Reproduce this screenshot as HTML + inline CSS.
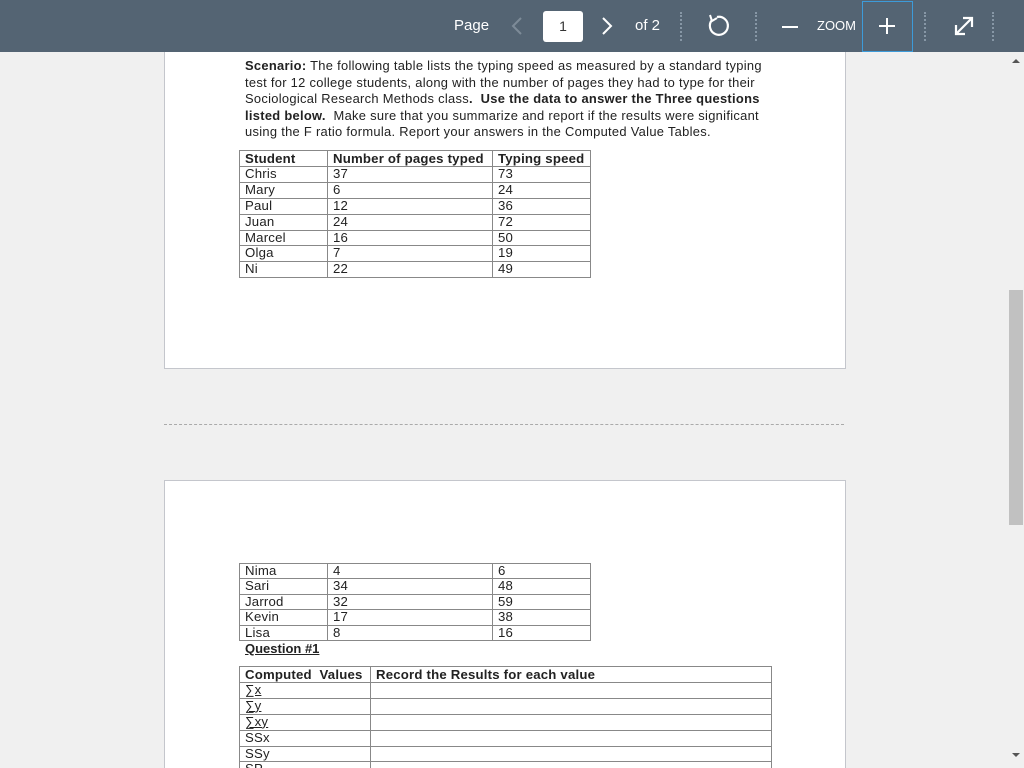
<!DOCTYPE html>
<html><head><style>
*{margin:0;padding:0;box-sizing:border-box}
html,body{width:1024px;height:768px;overflow:hidden}
body{background:#f0f0f0;font-family:"Liberation Sans",Arial,sans-serif;position:relative}
.tb{position:absolute;left:0;top:0;width:1024px;height:52px;background:#546473;color:#fff;z-index:10}
.tb .a{position:absolute;top:0;line-height:52px;font-size:15px}
.sep{position:absolute;top:12px;height:29px;border-left:2px dotted #8797a6}
.page{position:absolute;left:164px;width:682px;background:#fff;border:1px solid #c4c6cc}
.txt{position:absolute;left:245px;top:58px;width:520px;font-size:12.9px;line-height:16.5px;color:#222;letter-spacing:0.3px}
table{position:absolute;border-collapse:collapse;font-size:13.2px;color:#222;letter-spacing:0.2px}
td{border:1px solid #888;padding:0 0 0 5px;height:15.9px;line-height:14px;vertical-align:top}
th{border:1px solid #888;padding:0 0 0 5px;height:16px;text-align:left;line-height:15px}
.t2 td{height:15.4px;line-height:14px}
.dash{position:absolute;left:164px;top:424px;width:680px;border-top:1px dashed #aaa}
.sb{position:absolute;left:1008px;top:52px;width:16px;height:716px;background:#f0f0f0}
</style></head><body>
<div class="tb">
<span class="a" style="left:454px">Page</span>
<svg style="position:absolute;left:510px;top:16px" width="14" height="20"><path d="M11 2 L3 10 L11 18" stroke="#7d8b98" stroke-width="2" fill="none"/></svg>
<div style="position:absolute;left:543px;top:11px;width:40px;height:31px;background:#fff;border-radius:3px;color:#333;text-align:center;line-height:31px;font-size:14px">1</div>
<svg style="position:absolute;left:600px;top:16px" width="14" height="20"><path d="M3 2 L11 10 L3 18" stroke="#fff" stroke-width="2" fill="none"/></svg>
<span class="a" style="left:635px">of 2</span>
<div class="sep" style="left:680px"></div>
<svg style="position:absolute;left:704px;top:12px" width="28" height="28"><path d="M8 8 A9 9 0 1 0 13 5" stroke="#fff" stroke-width="2.2" fill="none"/><path d="M6 3 L8 9 L13 6" stroke="#fff" stroke-width="2" fill="none"/></svg>
<div class="sep" style="left:755px"></div>
<div style="position:absolute;left:782px;top:26px;width:16px;height:2px;background:#fff"></div>
<span class="a" style="left:817px;font-size:13px">ZOOM</span>
<div style="position:absolute;left:862px;top:1px;width:51px;height:51px;border:1px solid #3d9bd9"></div>
<div style="position:absolute;left:879px;top:25px;width:16px;height:2px;background:#fff"></div>
<div style="position:absolute;left:886px;top:18px;width:2px;height:16px;background:#fff"></div>
<div class="sep" style="left:924px"></div>
<svg style="position:absolute;left:953px;top:15px" width="22" height="22"><path d="M3 19 L19 3 M10 3 H19 V12 M3 10 V19 H12" stroke="#fff" stroke-width="2.2" fill="none"/></svg>
<div class="sep" style="left:992px"></div>
</div>
<div class="page" style="top:30px;height:339px"></div>
<div class="dash"></div>
<div class="page" style="top:480px;height:288px;border-bottom:none"></div>
<div class="txt"><b>Scenario:</b> The following table lists the typing speed as measured by a standard typing test for 12 college students, along with the number of pages they had to type for their Sociological Research Methods class<b>.&nbsp; Use the data to answer the Three questions listed below.</b>&nbsp; Make sure that you summarize and report if the results were significant using the F ratio formula. Report your answers in the Computed Value Tables.</div>
<table style="left:239px;top:150px;width:352px">
<tr><th style="width:88px">Student</th><th style="width:165px">Number of pages typed</th><th>Typing speed</th></tr>
<tr><td>Chris</td><td>37</td><td>73</td></tr>
<tr><td>Mary</td><td>6</td><td>24</td></tr>
<tr><td>Paul</td><td>12</td><td>36</td></tr>
<tr><td>Juan</td><td>24</td><td>72</td></tr>
<tr><td>Marcel</td><td>16</td><td>50</td></tr>
<tr><td>Olga</td><td>7</td><td>19</td></tr>
<tr><td>Ni</td><td>22</td><td>49</td></tr>
</table>
<table class="t2" style="left:239px;top:563px;width:352px">
<tr><td style="width:88px">Nima</td><td style="width:165px">4</td><td>6</td></tr>
<tr><td>Sari</td><td>34</td><td>48</td></tr>
<tr><td>Jarrod</td><td>32</td><td>59</td></tr>
<tr><td>Kevin</td><td>17</td><td>38</td></tr>
<tr><td>Lisa</td><td>8</td><td>16</td></tr>
</table>
<div style="position:absolute;left:245px;top:641px;font-size:13px;font-weight:bold;text-decoration:underline;color:#222">Question #1</div>
<table style="left:239px;top:666px;width:533px">
<tr><th style="width:131px">Computed&nbsp; Values</th><th>Record the Results for each value</th></tr>
<tr><td><u>∑x</u></td><td></td></tr>
<tr><td><u>∑y</u></td><td></td></tr>
<tr><td><u>∑xy</u></td><td></td></tr>
<tr><td>SSx</td><td></td></tr>
<tr><td>SSy</td><td></td></tr>
<tr><td>SP</td><td></td></tr>
</table>
<div class="sb">
<svg style="position:absolute;left:4px;top:6px" width="8" height="6"><path d="M0 5 L4 1 L8 5Z" fill="#555"/></svg>
<div style="position:absolute;left:1px;top:238px;width:14px;height:235px;background:#c1c1c1"></div>
<svg style="position:absolute;left:4px;top:700px" width="8" height="6"><path d="M0 1 L4 5 L8 1Z" fill="#555"/></svg>
</div>
</body></html>
